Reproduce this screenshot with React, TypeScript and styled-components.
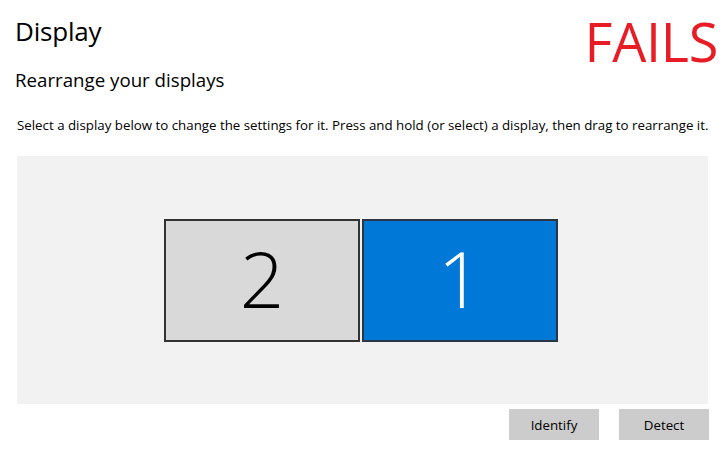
import React from "react";
import styled, { createGlobalStyle } from "styled-components";

const Global = createGlobalStyle`
  html, body { margin: 0; padding: 0; background: #ffffff; }
  body { font-family: "Open Sans", "Noto Sans", sans-serif; color: #000; }
`;

const Page = styled.div`
  width: 727px;
  height: 461px;
  position: relative;
  overflow: hidden;
  box-sizing: border-box;
  padding: 0 0 0 15px;
`;

const Header = styled.div`
  display: flex;
  justify-content: space-between;
  align-items: flex-start;
`;

const Title = styled.h1`
  margin: 0;
  padding-top: 13px;
  font-size: 26px;
  font-weight: 400;
  line-height: 36px;
  letter-spacing: -0.2px;
`;

const Fails = styled.div`
  font-size: 54px;
  line-height: 60px;
  color: #e81c24;
  padding-top: 11px;
  margin-right: 9px;
  letter-spacing: -0.3px;
`;

const Subtitle = styled.h2`
  margin: -3px 0 0 0;
  font-size: 18.7px;
  font-weight: 400;
  line-height: 24px;
`;

const Description = styled.p`
  margin: 24px 0 0 2px;
  font-size: 13.3px;
  line-height: 18px;
  white-space: nowrap;
`;

const Canvas = styled.div`
  margin: 22px 0 0 2px;
  width: 691px;
  height: 248px;
  background: #f2f2f2;
  display: flex;
  align-items: center;
  justify-content: center;
  gap: 2px;
  padding: 0 3px 0 0;
  box-sizing: border-box;
`;

const Monitor = styled.div<{ $active?: boolean }>`
  width: 196px;
  height: 123px;
  box-sizing: border-box;
  border: 2px solid ${(p) => (p.$active ? "#2b3745" : "#333333")};
  background: ${(p) => (p.$active ? "#0078d7" : "#d9d9d9")};
  color: ${(p) => (p.$active ? "#ffffff" : "#000000")};
  display: flex;
  align-items: center;
  justify-content: center;
  padding-bottom: 4px;
  font-size: 78px;
  font-weight: 300;
  line-height: 1;
`;

const Actions = styled.div`
  display: flex;
  justify-content: flex-end;
  gap: 20px;
  width: 694px;
  margin-top: 5px;
`;

const Button = styled.button`
  width: 90px;
  height: 31px;
  border: none;
  background: #cccccc;
  font-family: "Open Sans", "Noto Sans", sans-serif;
  font-size: 13.3px;
  color: #000;
  padding: 0;
`;

export default function App() {
  return (
    <Page>
      <Global />
      <Header>
        <Title>Display</Title>
        <Fails>FAILS</Fails>
      </Header>
      <Subtitle>Rearrange your displays</Subtitle>
      <Description>
        Select a display below to change the settings for it. Press and hold (or select) a display, then drag to rearrange it.
      </Description>
      <Canvas>
        <Monitor>2</Monitor>
        <Monitor $active>1</Monitor>
      </Canvas>
      <Actions>
        <Button>Identify</Button>
        <Button>Detect</Button>
      </Actions>
    </Page>
  );
}
